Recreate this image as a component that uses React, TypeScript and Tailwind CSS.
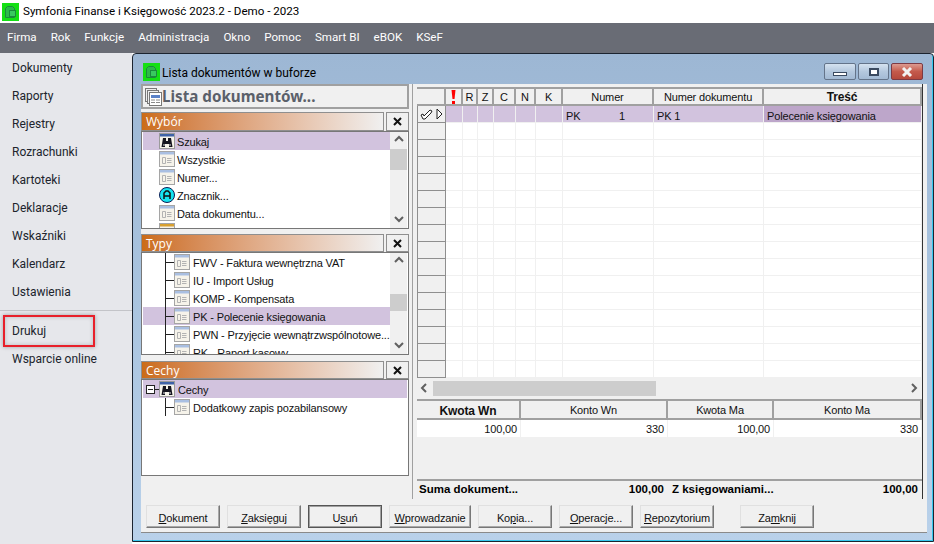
import type { ReactNode } from "react";

const menu = ["Firma", "Rok", "Funkcje", "Administracja", "Okno", "Pomoc", "Smart BI", "eBOK", "KSeF"];
const side = ["Dokumenty", "Raporty", "Rejestry", "Rozrachunki", "Kartoteki", "Deklaracje", "Wskaźniki", "Kalendarz", "Ustawienia"];

const AppIcon = () => (
  <svg width="17" height="18" viewBox="0 0 17 18" className="shrink-0">
    <rect x="0" y="0" width="17" height="18" fill="#14e014" />
    <path d="M3.500 5.500l2-2h5l2 2v9h-9z" fill="#2cb84a" stroke="#1a8a3c" />
    <rect x="7.500" y="7.500" width="6" height="6" fill="#38c860" stroke="#1a8a3c" />
  </svg>
);

const ListIcon = ({ tone = "#a9bfe2" }: { tone?: string }) => (
  <svg width="16" height="16" viewBox="0 0 16 16" className="shrink-0">
    <rect x="0.500" y="0.500" width="15" height="15" fill="#f6f3ea" stroke="#a5a5a5" />
    <rect x="1" y="1" width="14" height="2.500" fill={tone} />
    <path d="M3.500 6.500h3v6h-3zM8 7.500h4.500M8 9.500h4.500M8 11.500h4.500" fill="none" stroke="#b3b3b3" />
  </svg>
);

const Binoculars = () => (
  <svg width="16" height="16" viewBox="0 0 16 16" className="shrink-0">
    <rect x="0.500" y="0.500" width="15" height="15" fill="#f6f3ea" stroke="#9b9b9b" />
    <rect x="1" y="1" width="14" height="2.500" fill="#3f63a8" />
    <path d="M4 5h3v3h2V5h3l1.500 9H10v-3H6v3H2.500z" fill="#15151f" />
    <path d="M4.500 11h1v2h-1zM10.500 11h1v2h-1z" fill="#e8e8e8" />
  </svg>
);

const MarkerIcon = () => (
  <svg width="16" height="16" viewBox="0 0 16 16" className="shrink-0">
    <circle cx="8" cy="8" r="7.500" fill="#16e4ef" stroke="#0b1c55" />
    <path d="M5 12V6l2-2h2l2 2v6M5 9h6" fill="none" stroke="#111" strokeWidth="1.500" />
  </svg>
);

const StackIcon = () => (
  <svg width="17" height="18" viewBox="0 0 17 18" className="shrink-0">
    <rect x="0.500" y="0.500" width="11" height="13" fill="#eee" stroke="#777" />
    <rect x="2.500" y="2.500" width="11" height="13" fill="#eee" stroke="#777" />
    <rect x="4.500" y="4.500" width="12" height="13" fill="#fff" stroke="#777" />
    <rect x="6" y="7" width="9" height="3" fill="#5a82c8" />
    <path d="M6 12h4M6 14.500h4M11 12h4M11 14.500h4" stroke="#8a8a8a" />
  </svg>
);

const Chevron = ({ dir }: { dir: "up" | "down" | "left" | "right" }) => {
  const d = { up: "M1 6l4-4 4 4", down: "M1 2l4 4 4-4", left: "M6 1L2 5l4 4", right: "M3 1l4 4-4 4" }[dir];
  return (
    <svg width="10" height="10" viewBox="0 0 10 10" className={dir === "up" || dir === "down" ? "mx-auto shrink-0" : "shrink-0"}>
      <path d={d} fill="none" stroke="#606060" strokeWidth="2" />
    </svg>
  );
};

const SectionBar = ({ title, h }: { title: string; h: string }) => (
  <div className={`flex gap-[2px] ${h}`}>
    <div className="flex-1 border border-[#8f8f8f] bg-linear-to-r from-[#cb6c16] to-[#f0f0f0] pl-[4px] pt-px font-['Open_Sans',sans-serif] text-[12px] tracking-normal leading-none flex items-center text-white">
      {title}
    </div>
    <div className="w-[23px] border border-[#8f8f8f] flex items-center justify-center">
      <svg width="9" height="9" viewBox="0 0 9 9">
        <path d="M1 1l7 7M8 1L1 8" stroke="#111" strokeWidth="2" />
      </svg>
    </div>
  </div>
);

const VScroll = ({ top, thumbH }: { top: string; thumbH: string }) => (
  <div className="w-[17px] shrink-0 bg-[#f0f0f0] flex flex-col justify-between py-[3px]">
    <Chevron dir="up" />
    <div className={`bg-[#cdcdcd] ${top} ${thumbH}`} />
    <div className="flex-1" />
    <Chevron dir="down" />
  </div>
);

const Item = ({ icon, label, active }: { icon: ReactNode; label: string; active?: boolean }) => (
  <div className={`h-[18px] shrink-0 flex items-center gap-[2px] pl-[16px] ${active ? "bg-[#d2c3de]" : ""}`}>
    {icon}
    <span className="whitespace-nowrap pt-[2px]">{label}</span>
  </div>
);

const TreeItem = ({ label, active }: { label: string; active?: boolean }) => (
  <div className={`h-[18px] shrink-0 flex items-center ${active ? "bg-[#d2c3de]" : ""}`}>
    <div className="ml-[22px] w-[9px] h-[18px] shrink-0 border-l border-[#222] flex items-center">
      <div className="w-full border-t border-[#222]" />
    </div>
    <ListIcon />
    <span className="ml-[3px] whitespace-nowrap pt-[2px]">{label}</span>
  </div>
);

const cols = [
  "w-[29px]", "w-[17px]", "w-[15px]", "w-[16px]", "w-[22px]", "w-[20px]", "w-[27px]", "w-[91px]", "w-[110px]", "flex-1",
];
const heads = ["", "!", "R", "Z", "C", "N", "K", "Numer", "Numer dokumentu", "Treść"];

const GridHeader = () => (
  <div className="flex h-[19px] shrink-0">
    {heads.map((h, i) => (
      <div key={i} className={`${cols[i]} shrink-0 border-y-2 border-r-2 border-[#a0a0a0] pt-px flex items-center justify-center ${h === "Treść" ? "font-bold text-[12px]" : ""}`}>
        {h === "!" ? (
          <svg width="5" height="14" viewBox="0 0 5 14">
            <path d="M0.500 0h4L3.500 9h-2z" fill="#f00" />
            <rect x="1" y="11" width="3" height="3" fill="#f00" />
          </svg>
        ) : (
          h
        )}
      </div>
    ))}
  </div>
);

const GridRow = ({ first }: { first?: boolean }) => (
  <div className="flex h-[17px] shrink-0">
    {cols.map((c, i) => {
      if (i === 0) {
        return (
          <div key={i} className={`${c} shrink-0 bg-[#f0f0f0] border border-t-0 border-[#8f8f8f] flex items-center justify-between pl-[2px] pr-[2px]`}>
            {first && (
              <>
                <svg width="13" height="11" viewBox="0 0 13 11" className="shrink-0">
                  <path d="M1 6l2-1 1 2 6-6 2 1-1 2-6 6H3z" fill="#fff" stroke="#222" />
                </svg>
                <svg width="7" height="12" viewBox="0 0 7 12" className="shrink-0">
                  <path d="M1 1l5 5-5 5z" fill="#fff" stroke="#222" />
                </svg>
              </>
            )}
          </div>
        );
      }
      let bg = first ? "bg-[#d2c3de]" : "bg-white";
      if (first && i === 9) bg = "bg-[#bda6ca]";
      return (
        <div key={i} className={`${c} shrink-0 ${bg} border-r border-b border-[#f0f0f0] flex items-center pl-[3px] pt-[4px] leading-[12px]`}>
          {first && i === 7 && (
            <span className="flex w-full justify-between pr-[28px]">
              <span>PK</span>
              <span>1</span>
            </span>
          )}
          {first && i === 8 && "PK 1"}
          {first && i === 9 && "Polecenie księgowania"}
        </div>
      );
    })}
  </div>
);

const bookCols = ["w-[104px]", "w-[147px]", "w-[106px]", "flex-1"];
const bookHeads = ["Kwota Wn", "Konto Wn", "Kwota Ma", "Konto Ma"];
const bookVals = ["100,00", "330", "100,00", "330"];

const Btn = ({ w, focus, children }: { w: string; focus?: boolean; children: ReactNode }) => (
  <div className={`${w} h-[23px] shrink-0 bg-[#f0f0f0] flex items-center justify-center pt-[3px] border ${focus ? "border-[#555] shadow-[inset_0_0_0_1px_#a0a0a0]" : "border-[#e0e0e0] border-r-[#777] border-b-[#777] shadow-[inset_-1px_-1px_0_#a8a8a8]"}`}>
    <span>{children}</span>
  </div>
);

const WinBtn = ({ w, close, children }: { w: string; close?: boolean; children: ReactNode }) => (
  <div className={`${w} h-[17px] rounded-[2px] border flex items-center justify-center ${close ? "border-[#7c3a44] bg-linear-to-b from-[#dc9a90] via-[#c45a4c] to-[#b5483c]" : "border-[#64748a] bg-linear-to-b from-[#d5e2f0] via-[#b4c8de] to-[#a3bad4]"}`}>
    {children}
  </div>
);

export default function App() {
  return (
    <div className="w-[934px] h-[544px] overflow-hidden flex flex-col bg-white font-['Liberation_Sans',Arial,sans-serif]">
      <div className="h-[23px] shrink-0 flex items-center pl-[2px] gap-[4px] font-['Roboto',sans-serif] text-[11.6px] text-black">
        <AppIcon />
        <span className="whitespace-nowrap">Symfonia Finanse i Księgowość 2023.2 - Demo - 2023</span>
      </div>
      <div className="h-[30px] shrink-0 bg-[#696c75] flex items-center pl-[7px] gap-[14px] font-['Roboto',sans-serif] text-[11.6px] text-white">
        {menu.map((m) => (
          <span key={m}>{m}</span>
        ))}
      </div>
      <div className="flex-1 flex min-h-0">
        <aside className="w-[132px] shrink-0 bg-[#e6e7eb] font-['Roboto',sans-serif] text-[12px] text-[#20242c] pt-px">
          {side.map((s) => (
            <div key={s} className="h-[28px] pl-[12px] flex items-center">
              {s}
            </div>
          ))}
          <div className="mt-[4px] mb-[6px] border-t border-[#c3c4c8]" />
          <div className="relative h-[28px] pl-[12px] flex items-center">
            Drukuj
            <div className="absolute left-[3px] top-[-2px] w-[92px] h-[32px] border-2 border-[#e8202a] shadow-[0_0_4px_rgba(0,0,0,0.3),inset_0_0_4px_rgba(0,0,0,0.2)]" />
          </div>
          <div className="h-[28px] pl-[12px] flex items-center">Wsparcie online</div>
        </aside>

        <main className="flex-1 min-w-0 h-[489px] border border-[#1c2430] rounded-t-[4px] bg-linear-to-b from-[#9db7d4] via-[#a9c4df] to-[#b9d1ea] shadow-[inset_-1px_-1px_0_#36c8ee] flex flex-col text-[11px] tracking-[-0.15px] text-[#111]">
          <div className="h-[30px] shrink-0 flex items-center pl-[10px] pr-[10px] pt-[5px]">
            <AppIcon />
            <span className="ml-[2px] pt-[2px] font-['Roboto',sans-serif] tracking-normal text-[12px] text-black">Lista dokumentów w buforze</span>
            <div className="ml-auto flex gap-[2px]">
              <WinBtn w="w-[32px]">
                <div className="w-[14px] h-[4px] bg-white border border-[#3a4a60] mt-[5px]" />
              </WinBtn>
              <WinBtn w="w-[31px]">
                <div className="w-[10px] h-[8px] bg-white border-2 border-[#3a4a60]" />
              </WinBtn>
              <WinBtn w="w-[32px]" close>
                <svg width="14" height="10" viewBox="0 0 14 10">
                  <path d="M3 1l8 8M11 1L3 9" stroke="#f2f2f2" strokeWidth="3" />
                </svg>
              </WinBtn>
            </div>
          </div>

          <div className="h-[449px] shrink-0 ml-[8px] mr-[6px] bg-[#f0f0f0] flex flex-col border-b border-[#8a8a8a]">
            <div className="flex-1 min-h-0 flex">
              <div className="w-[268px] shrink-0 flex flex-col">
                <div className="h-[25px] border-2 border-[#a0a0a0] flex items-center pl-[2px] shrink-0">
                  <StackIcon />
                  <span className="text-[15.2px] tracking-normal font-bold text-[#5b606a] font-['Noto_Sans',sans-serif] leading-none">Lista dokumentów...</span>
                </div>
                <div className="mt-[3px]">
                  <SectionBar title="Wybór" h="h-[19px]" />
                </div>
                <div className="h-[98px] shrink-0 border border-[#777] bg-white flex overflow-hidden px-px">
                  <div className="flex-1 min-w-0 flex flex-col overflow-hidden">
                    <Item icon={<Binoculars />} label="Szukaj" active />
                    <Item icon={<ListIcon />} label="Wszystkie" />
                    <Item icon={<ListIcon />} label="Numer..." />
                    <Item icon={<MarkerIcon />} label="Znacznik..." />
                    <Item icon={<ListIcon />} label="Data dokumentu..." />
                    <Item icon={<ListIcon tone="#d8a030" />} label="Kontrahent..." />
                  </div>
                  <VScroll top="mt-[4px]" thumbH="h-[21px]" />
                </div>
                <div className="mt-[5px]">
                  <SectionBar title="Typy" h="h-[18px]" />
                </div>
                <div className="h-[103px] shrink-0 border border-[#777] bg-white flex overflow-hidden px-px">
                  <div className="flex-1 min-w-0 flex flex-col overflow-hidden">
                    <TreeItem label="FWV - Faktura wewnętrzna VAT" />
                    <TreeItem label="IU - Import Usług" />
                    <TreeItem label="KOMP - Kompensata" />
                    <TreeItem label="PK - Polecenie księgowania" active />
                    <TreeItem label="PWN - Przyjęcie wewnątrzwspólnotowe..." />
                    <TreeItem label="RK - Raport kasowy" />
                  </div>
                  <VScroll top="mt-[28px]" thumbH="h-[17px]" />
                </div>
                <div className="mt-[6px]">
                  <SectionBar title="Cechy" h="h-[18px]" />
                </div>
                <div className="h-[97px] shrink-0 border border-[#777] bg-white px-px">
                  <div className="h-[18px] flex items-center bg-[#d2c3de] pl-[3px]">
                    <svg width="9" height="9" viewBox="0 0 9 9" className="shrink-0">
                      <rect x="0.500" y="0.500" width="8" height="8" fill="#fff" stroke="#222" />
                      <path d="M2 4.500h5" stroke="#222" />
                    </svg>
                    <div className="w-[4px] border-t border-[#222]" />
                    <Binoculars />
                    <span className="ml-[3px] pt-[2px]">Cechy</span>
                  </div>
                  <TreeItem label="Dodatkowy zapis pozabilansowy" />
                </div>
              </div>

              <div className="w-px ml-[3px] bg-[#a0a0a0] shrink-0" />

              <div className="flex-1 min-w-0 ml-[4px] mr-[4px] pt-[3px] flex flex-col border-r border-[#333]">
                <GridHeader />
                {Array.from({ length: 16 }, (_, i) => (
                  <GridRow key={i} first={i === 0} />
                ))}
                <div className="h-[16px] mt-[2px] shrink-0 flex items-center justify-between">
                  <div className="w-[16px] flex justify-center"><Chevron dir="left" /></div>
                  <div className="h-[15px] w-[223px] bg-[#cdcdcd]" />
                  <div className="flex-1" />
                  <div className="w-[16px] flex justify-center"><Chevron dir="right" /></div>
                </div>
                <div className="mt-[3px] flex h-[21px] shrink-0 border-y-2 border-[#a0a0a0]">
                  {bookHeads.map((h, i) => (
                    <div key={h} className={`${bookCols[i]} border-r-2 border-[#a0a0a0] pt-[2px] flex items-center justify-center ${i === 0 ? "font-bold text-[12px]" : ""}`}>
                      {h}
                    </div>
                  ))}
                </div>
                <div className="flex h-[17px] shrink-0 bg-white">
                  {bookVals.map((v, i) => (
                    <div key={i} className={`${bookCols[i]} border-r border-[#f0f0f0] pt-[2px] flex items-center justify-end pr-[3px]`}>
                      {v}
                    </div>
                  ))}
                </div>
                <div className="h-[42px] shrink-0" />
                <div className="border-t-2 border-[#a0a0a0] h-[20px] shrink-0 flex items-center font-bold text-[11.5px] tracking-normal text-black whitespace-nowrap">
                  <span className="w-[103px] pl-[2px]">Suma dokument...</span>
                  <span className="w-[144px] text-right">100,00</span>
                  <span className="ml-[8px]">Z księgowaniami...</span>
                  <span className="flex-1 text-right pr-[4px]">100,00</span>
                </div>
              </div>
            </div>

            <div className="h-[33px] shrink-0 flex items-end pb-[4px] pl-[5px] gap-[7px]">
              <Btn w="w-[74px]"><u>D</u>okument</Btn>
              <Btn w="w-[74px]"><u>Z</u>aksięguj</Btn>
              <Btn w="w-[74px]" focus>U<u>s</u>uń</Btn>
              <Btn w="w-[82px]"><u>W</u>prowadzanie</Btn>
              <Btn w="w-[74px]">Ko<u>p</u>ia...</Btn>
              <Btn w="w-[74px]"><u>O</u>peracje...</Btn>
              <Btn w="w-[74px]"><u>R</u>epozytorium</Btn>
              <div className="w-[12px]" />
              <Btn w="w-[74px]">Za<u>m</u>knij</Btn>
            </div>
          </div>
        </main>
      </div>
    </div>
  );
}
